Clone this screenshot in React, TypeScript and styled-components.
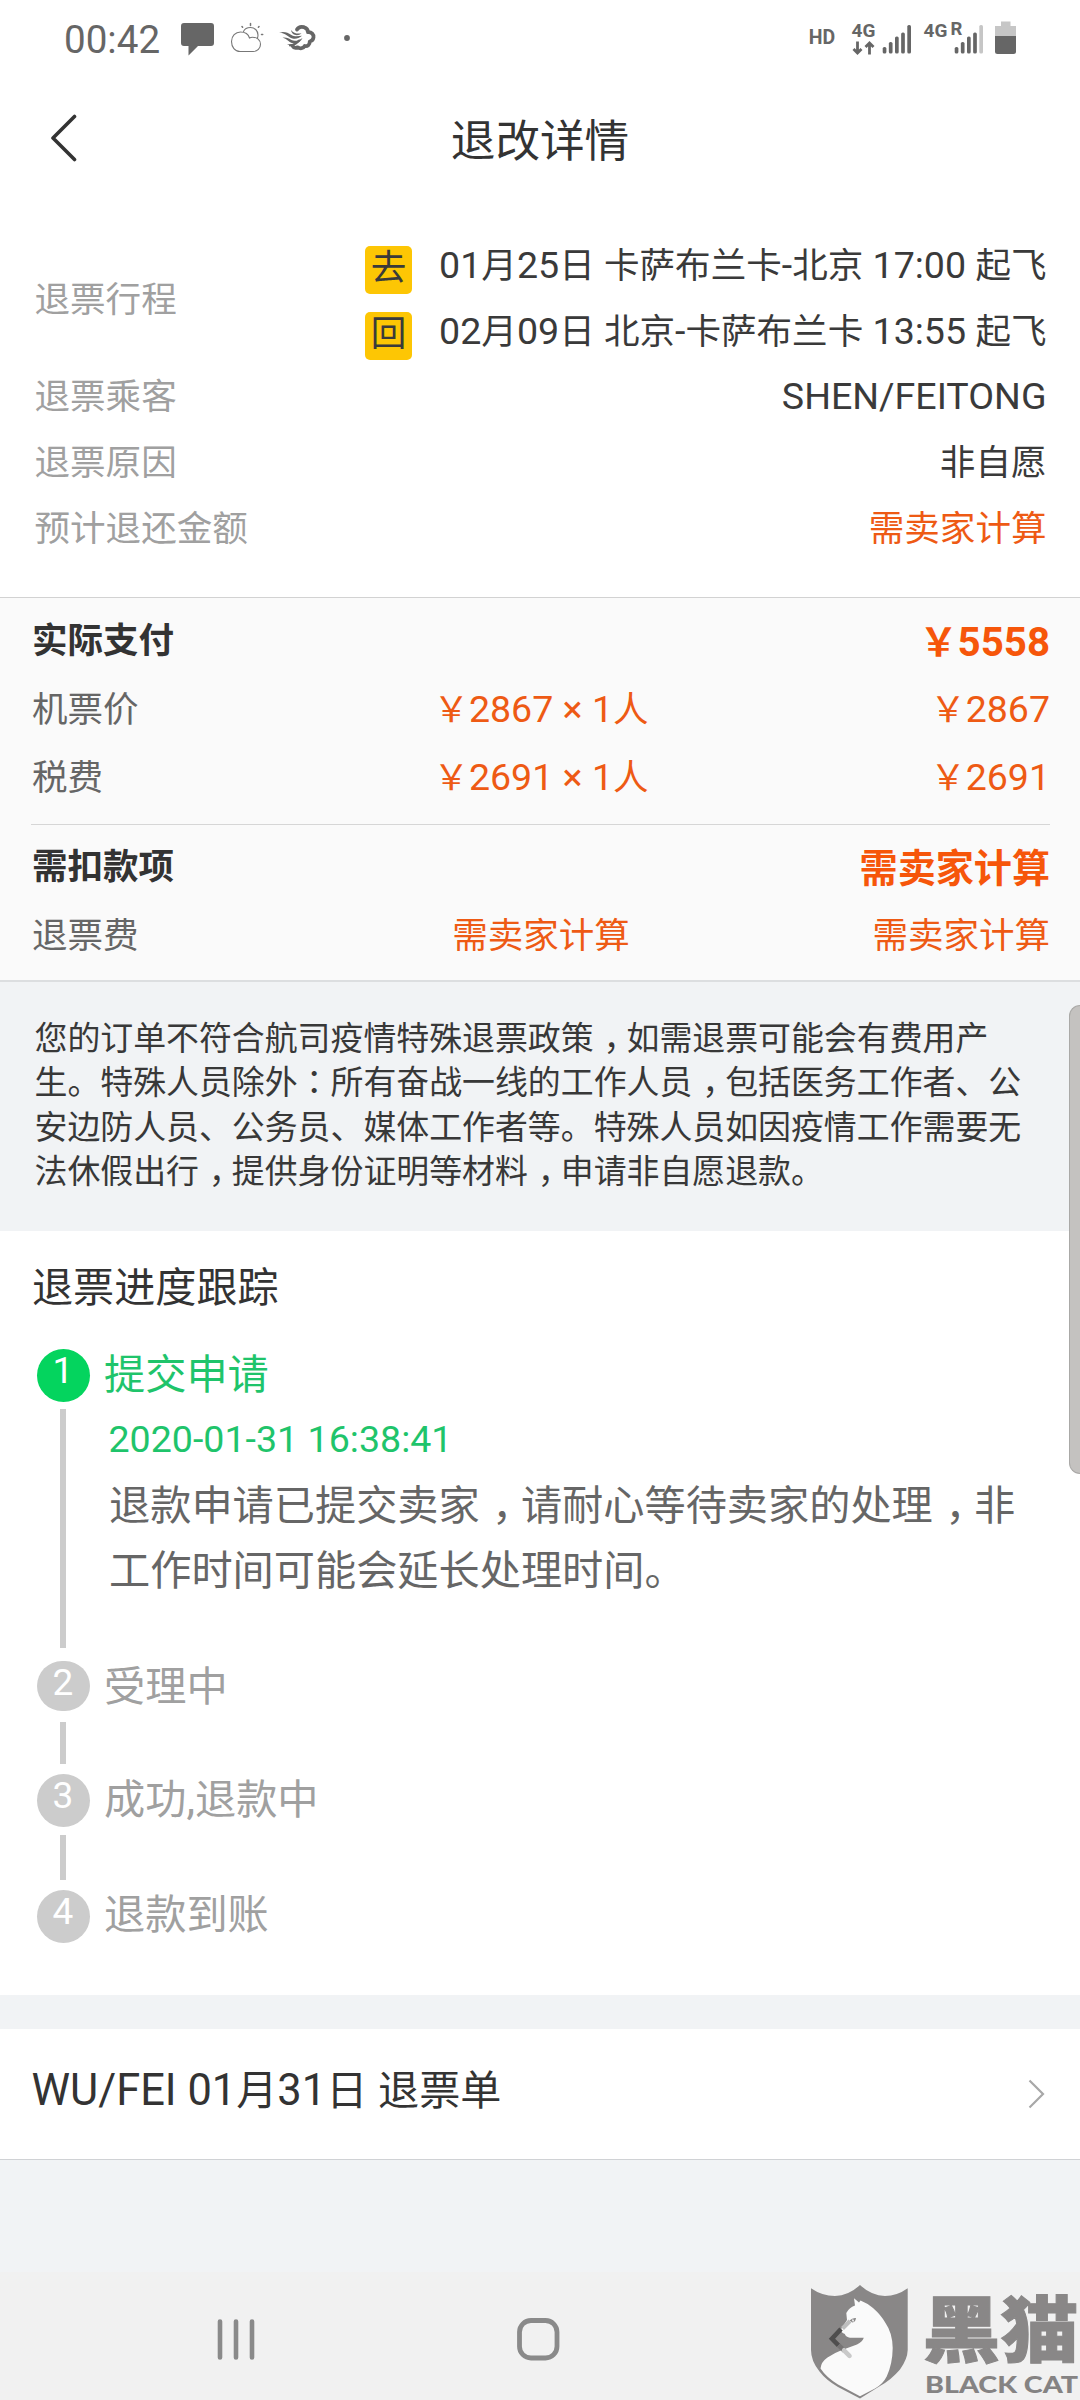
import React from "react";
import styled, { createGlobalStyle } from "styled-components";

const GlobalStyle = createGlobalStyle`
  * { box-sizing: border-box; }
  html, body { margin: 0; padding: 0; background: #fff; }
  body {
    font-family: Roboto, "Noto Sans CJK SC", sans-serif;
    text-spacing-trim: space-all;
    text-autospace: no-autospace;
  }
`;

const ORANGE = "#ee5a14";

const Screen = styled.div`
  position: relative;
  width: 1080px;
  height: 2400px;
  display: flex;
  flex-direction: column;
  background: #f1f3f5;
  overflow: hidden;
`;

/* ---------- mixed script text ---------- */

const Latin = styled.span`
  font-size: 1.057em;
  line-height: 1;
`;
const Comma = styled.span`
  font-feature-settings: "halt";
  padding-left: 0.3em;
  padding-right: 0.2em;
`;
const Colon = styled.span`
  font-family: "Noto Sans CJK JP", sans-serif;
  line-height: 1;
`;

function Mixed({ children }: { children: string }) {
  const runs = children.match(/[\x20-\x7e×]+|，|：|[^\x20-\x7e×，：]+/g) ?? [];
  return (
    <>
      {runs.map((run, i) => {
        if (run === "，") return <Comma key={i}>{run}</Comma>;
        if (run === "：") return <Colon key={i}>{run}</Colon>;
        if (/^[\x20-\x7e×]/.test(run)) return <Latin key={i}>{run}</Latin>;
        return <React.Fragment key={i}>{run}</React.Fragment>;
      })}
    </>
  );
}

/* ---------- status bar ---------- */

const StatusBar = styled.div`
  height: 76px;
  padding: 0 61px 0 64px;
  display: flex;
  justify-content: space-between;
  background: #fff;
  color: #666;
`;
const StatusGroup = styled.div`
  display: flex;
  align-items: flex-start;
`;
const Clock = styled.div`
  width: 117px;
  padding-top: 1px;
  font-size: 38.6px;
  line-height: 77px;
`;

/* ---------- header ---------- */

const Header = styled.div`
  height: 124px;
  padding: 0 50px;
  display: grid;
  grid-template-columns: 60px 1fr 60px;
  background: #fff;
  color: #333;
`;
const BackIcon = styled.svg`
  width: 28px;
  height: 48px;
  margin-top: 38px;
`;
const Title = styled.h1`
  margin: 0;
  font-size: 44.6px;
  font-weight: 400;
  line-height: 132px;
  text-align: center;
`;

/* ---------- refund info ---------- */

const Info = styled.section`
  height: 397px;
  padding: 33px 33.5px 0 34.5px;
  background: #fff;
  font-size: 35.55px;
  line-height: 66px;
`;
const InfoRow = styled.div<{ $h?: number }>`
  height: ${(p) => p.$h ?? 66}px;
  display: flex;
  justify-content: space-between;
  align-items: center;
`;
const InfoLabel = styled.div<{ $drop?: number }>`
  padding-top: ${(p) => p.$drop ?? 0}px;
  color: #a0a0a0;
`;
const InfoValue = styled.div<{ $accent?: boolean }>`
  color: ${(p) => (p.$accent ? ORANGE : "#3a3a3a")};
`;
const Trip = styled.div`
  display: grid;
  grid-template-columns: 47px auto;
  column-gap: 27px;
  height: 66px;
`;
const Badge = styled.span`
  height: 48px;
  margin-top: 13px;
  border-radius: 5px;
  background: #fdc604;
  line-height: 44px;
  text-align: center;
`;

/* ---------- payment ---------- */

const Payment = styled.section`
  height: 385px;
  padding: 8px 30px 0 31px;
  border-top: 1px solid #d2d2d2;
  border-bottom: 2px solid #dcdee0;
  background: #fafafa;
  font-size: 35.5px;
`;
const PayRow = styled.div<{ $h: number }>`
  height: ${(p) => p.$h}px;
  padding: 0 0 0 1px;
  line-height: ${(p) => p.$h}px;
  display: grid;
  grid-template-columns: 1fr 1fr 1fr;
`;
const PayLabel = styled.div<{ $strong?: boolean }>`
  color: ${(p) => (p.$strong ? "#333" : "#666")};
  font-weight: ${(p) => (p.$strong ? 700 : 400)};
`;
const PayDetail = styled.div`
  color: ${ORANGE};
  text-align: center;
  white-space: nowrap;
`;
const PayAmount = styled.div<{ $strong?: boolean }>`
  color: ${(p) => (p.$strong ? "#f6560a" : ORANGE)};
  font-size: ${(p) => (p.$strong ? 38.1 : 35.5)}px;
  font-weight: ${(p) => (p.$strong ? 700 : 400)};
  padding-top: ${(p) => (p.$strong ? 2 : 0)}px;
  text-align: right;
  white-space: nowrap;
`;
const Divider = styled.div`
  height: 1px;
  margin: 12px 0 8px;
  background: #d6d6d6;
`;

/* ---------- notice ---------- */

const Notice = styled.p`
  margin: 0;
  height: 249px;
  padding: 34.5px 56px 0 34.5px;
  font-size: 32.9px;
  line-height: 44.6px;
  color: #383838;
`;

/* ---------- progress ---------- */

const Progress = styled.section`
  height: 764px;
  padding: 26px 30px 0 32px;
  background: #fff;
`;
const ProgressTitle = styled.h2`
  margin: 0 0 30px;
  font-size: 41.1px;
  font-weight: 400;
  line-height: 62px;
  color: #333;
`;
const Step = styled.div<{ $h: number }>`
  height: ${(p) => p.$h}px;
  display: flex;
  padding-left: 4.5px;
`;
const Rail = styled.div`
  width: 53px;
  display: flex;
  flex-direction: column;
  align-items: center;
`;
const Dot = styled.div<{ $done?: boolean; $h: number }>`
  width: 53px;
  height: ${(p) => p.$h}px;
  border-radius: 27px;
  background: ${(p) => (p.$done ? "#04d45e" : "#ccc")};
  color: #fff;
  font-size: 37px;
  line-height: 44px;
  text-align: center;
`;
const Line = styled.div<{ $gap: number; $h: number }>`
  width: 6px;
  height: ${(p) => p.$h}px;
  margin-top: ${(p) => p.$gap}px;
  background: #ccc;
`;
const StepBody = styled.div`
  flex: 1;
  padding-left: 14.5px;
  font-size: 41.2px;
`;
const StepTitle = styled.div<{ $done?: boolean; $lh?: number }>`
  line-height: ${(p) => p.$lh ?? 53}px;
  color: ${(p) => (p.$done ? "#1fc46b" : "#a0a0a0")};
`;
const StepTime = styled.div`
  margin-top: 3px;
  padding-left: 4.5px;
  font-size: 37.6px;
  line-height: 69px;
  color: #1fc46b;
`;
const StepText = styled.div`
  padding-left: 5px;
  line-height: 65px;
  color: #666;
`;

/* ---------- ticket link ---------- */

const TicketRow = styled.div`
  height: 131px;
  margin-top: 34px;
  padding: 0 35px 6px 31.5px;
  border-bottom: 1px solid #d0d2d5;
  display: flex;
  align-items: center;
  justify-content: space-between;
  background: #fff;
  font-size: 41.1px;
  line-height: 60px;
  color: #333;
`;
const Chevron = styled.svg`
  width: 17px;
  height: 30px;
  margin-top: 5px;
`;

/* ---------- navigation bar ---------- */

const NavBar = styled.div`
  height: 128px;
  margin-top: auto;
  padding: 0 217px;
  display: flex;
  background: #f1f1f1;
`;
const NavIcon = styled.svg<{ $left?: number }>`
  width: 44px;
  height: 44px;
  margin-top: 45px;
  margin-left: ${(p) => p.$left ?? 0}px;
`;

/* ---------- overlays ---------- */

const ScrollThumb = styled.div`
  position: absolute;
  top: 1005px;
  right: 0;
  width: 11px;
  height: 469px;
  border: 1px solid #aaa9a7;
  border-right: 0;
  border-radius: 11px 0 0 11px;
  background: #c4c2c0;
`;
const Watermark = styled.svg`
  position: absolute;
  right: 0;
  bottom: 0;
  width: 280px;
  height: 140px;
`;

function SignalBars({ x, weak }: { x: number; weak?: boolean }) {
  const tops = [47, 42, 36.5, 32.5, 25];
  return (
    <>
      {tops.map((top, i) => (
        <rect
          key={i}
          x={x + i * 6.15}
          y={top}
          width="3.7"
          height={53.5 - top}
          rx="1.6"
          fill={weak && i === 4 ? "#c6c6c6" : "#666"}
        />
      ))}
    </>
  );
}

function Status() {
  return (
    <StatusBar>
      <StatusGroup>
        <Clock>00:42</Clock>
        <svg width="180" height="76" viewBox="181 0 180 76">
          <path d="M184 23h27q3 0 3 3v17q0 3-3 3h-13l-9.500 9.500V46H184q-3 0-3-3V26q0-3 3-3z" fill="#666" />
          <g fill="none" stroke="#777" strokeWidth="1.1" strokeLinecap="round">
            <path d="M240 51.500c-5 0-8.500-4.500-8.500-10 0-5.500 4-9.500 9-9.500 4.500 0 8 2.500 9 6 1-.6 2-.8 3-.8 4.500 0 8 3 8 7 0 4.200-3.200 7.300-7.300 7.300z" />
            <path d="M243.500 31.500c1-2.500 4-4 7-4 4.500 0 7.500 3.500 7.500 7.500 0 1.200-.2 2.300-.7 3.300" />
            <path d="M250.500 23.500v2M242 26.500l.6.700M259 26.500l-.6.700M261.500 34.500h1.200" strokeWidth="1.500" />
          </g>
          <g fill="none" stroke="#666" strokeLinecap="round" strokeLinejoin="round">
            <path
              d="M297 29.500c1.500-2.500 4.500-3 7-2.300 2.500.8 4 2.800 4 5 3.500-.3 6 2.300 5.500 5.300-.4 2.500-2 3.600-3.800 4 .2 3-2 5-5 4.500-1.500 2.500-4.500 3-7 1.300-2 1-4 .4-5-1.300"
              strokeWidth="3.800"
            />
            <path d="M290 45.500c4-.5 7-2 9-5" strokeWidth="2" />
          </g>
          <path
            d="M279 32.500c5-1.500 9 0 12 2.300 3 2 7 1.500 11 1-3 2.500-6 3.500-9.500 2.700-4-1-7-5.500-13.500-6zM282.500 37.500c4-.5 6.500.8 9 2.500 3 1.600 7 .8 11-2-1.500 3-4 5.500-8 5.500-5 0-7-4.500-12-6zM287 44c3 .5 5.500.3 8-.8-1.500 2.500-5.500 3-8 .8zM291 30c3 3.800 6.500 4 10.500 3.300-3 3-9.500 2.700-10.500-3.300z"
            fill="#666"
          />
          <circle cx="347" cy="38" r="2.900" fill="#666" />
        </svg>
      </StatusGroup>
      <svg width="210" height="76" viewBox="809 0 210 76" fontFamily="Roboto, sans-serif" fontWeight="700" fill="#666">
        <text x="808.800" y="44" fontSize="19.500">HD</text>
        <text x="851.500" y="36.500" fontSize="19">4G</text>
        <path
          d="M857.500 41.500v11M853.500 49l4 4 4-4M869.500 54.500v-11M865.500 47l4-4 4 4"
          fill="none"
          stroke="#666"
          strokeWidth="2.800"
        />
        <SignalBars x={882.7} />
        <text x="923.500" y="36.500" fontSize="19">4G</text>
        <text x="950.500" y="35" fontSize="18.500">R</text>
        <SignalBars x={954.7} weak />
        <path d="M1001 21.500h9.500V26h5.500v11h-21V26h6z" fill="#c6c6c6" />
        <path d="M995 36h21v15.500q0 2.500-2.500 2.500h-16q-2.500 0-2.500-2.500z" />
      </svg>
    </StatusBar>
  );
}

function BlackCat() {
  return (
    <Watermark viewBox="800 2260 280 140">
      <path
        d="M811 2288.300Q822 2296 835 2296 849 2295.500 860 2285 871 2295.500 885 2296 897 2296 907.700 2288.300V2350Q907.500 2359 900 2369.500 891 2380 880 2386L860 2398.500 838 2387Q826 2380 819.500 2371.500 811 2361 811 2350z"
        fill="#898787"
      />
      <path
        d="M854 2298.300L859 2302.500 860.500 2300.500Q867 2303 873 2308 881 2315 885.500 2323 892.500 2333 892.700 2348 892.500 2364 886.700 2376.500 883 2384 875 2388.500L860 2396.300 838 2384.500Q826 2377 820.500 2368.500 821 2362 827.500 2357.500 834 2353 842 2350L857 2344.500Q862.500 2342 863.800 2337.800L850 2337.800Q846 2337.300 844.800 2334 840 2332 841.500 2328.500L847 2320 846.300 2313Q849 2307.500 855 2305.500z"
        fill="#fafafa"
      />
      <path d="M849.500 2320.500q3-3 6.500-2.500-.5 4-3.500 4.500z" fill="#8a8888" />
      <path d="M852.500 2319.500l1 2" stroke="#fafafa" strokeWidth="1.500" />
      <path d="M850 2321l-7.500 7.500" stroke="#bdbdbd" strokeWidth="4" fill="none" />
      <path d="M841 2329l-9 9.800 6.500 6.500" stroke="#4f4e4e" strokeWidth="4.600" fill="none" />
      <path d="M838.500 2345.300l6 5.500" stroke="#767474" strokeWidth="4.600" fill="none" />
      <path d="M844 2350.300l5.500 5.500" stroke="#c9c9c9" strokeWidth="4.600" strokeLinecap="round" fill="none" />
      <text
        x="922.500"
        y="2356"
        fontFamily="'Noto Sans CJK SC', sans-serif"
        fontWeight="900"
        fontSize="72"
        textLength="156"
        lengthAdjust="spacingAndGlyphs"
        fill="#898787"
        stroke="#898787"
        strokeWidth="1"
      >
        黑猫
      </text>
      <text
        x="925"
        y="2392.500"
        fontFamily="Lato, sans-serif"
        fontWeight="900"
        fontSize="23"
        textLength="153"
        lengthAdjust="spacingAndGlyphs"
        fill="#858383"
      >
        BLACK CAT
      </text>
    </Watermark>
  );
}

const trips = [
  { badge: "去", text: "01月25日 卡萨布兰卡-北京 17:00 起飞" },
  { badge: "回", text: "02月09日 北京-卡萨布兰卡 13:55 起飞" },
];

const pending = [
  { title: "受理中", h: 113, dot: 50, gap: 11, line: 42, lh: 53 },
  { title: "成功,退款中", h: 116, dot: 53, gap: 7.5, line: 45, lh: 53 },
  { title: "退款到账", h: 53, dot: 53, gap: 0, line: 0, lh: 50 },
];

export default function App() {
  return (
    <Screen>
      <GlobalStyle />
      <Status />
      <Header>
        <BackIcon viewBox="50 114 28 48">
          <path d="M74.500 116.500L53 138l21.500 21.500" fill="none" stroke="#333" strokeWidth="3.600" strokeLinecap="round" strokeLinejoin="round" />
        </BackIcon>
        <Title>退改详情</Title>
      </Header>

      <Info>
        <InfoRow $h={131}>
          <InfoLabel $drop={3}>退票行程</InfoLabel>
          <InfoValue>
            {trips.map((t) => (
              <Trip key={t.badge}>
                <Badge>{t.badge}</Badge>
                <span><Mixed>{t.text}</Mixed></span>
              </Trip>
            ))}
          </InfoValue>
        </InfoRow>
        <InfoRow>
          <InfoLabel>退票乘客</InfoLabel>
          <InfoValue><Mixed>SHEN/FEITONG</Mixed></InfoValue>
        </InfoRow>
        <InfoRow>
          <InfoLabel>退票原因</InfoLabel>
          <InfoValue>非自愿</InfoValue>
        </InfoRow>
        <InfoRow>
          <InfoLabel>预计退还金额</InfoLabel>
          <InfoValue $accent>需卖家计算</InfoValue>
        </InfoRow>
      </Info>

      <Payment>
        <PayRow $h={70}>
          <PayLabel $strong>实际支付</PayLabel>
          <span />
          <PayAmount $strong><Mixed>￥5558</Mixed></PayAmount>
        </PayRow>
        <PayRow $h={68}>
          <PayLabel>机票价</PayLabel>
          <PayDetail><Mixed>￥2867 × 1人</Mixed></PayDetail>
          <PayAmount><Mixed>￥2867</Mixed></PayAmount>
        </PayRow>
        <PayRow $h={68}>
          <PayLabel>税费</PayLabel>
          <PayDetail><Mixed>￥2691 × 1人</Mixed></PayDetail>
          <PayAmount><Mixed>￥2691</Mixed></PayAmount>
        </PayRow>
        <Divider />
        <PayRow $h={69}>
          <PayLabel $strong>需扣款项</PayLabel>
          <span />
          <PayAmount $strong>需卖家计算</PayAmount>
        </PayRow>
        <PayRow $h={69}>
          <PayLabel>退票费</PayLabel>
          <PayDetail>需卖家计算</PayDetail>
          <PayAmount>需卖家计算</PayAmount>
        </PayRow>
      </Payment>

      <Notice>
        <Mixed>您的订单不符合航司疫情特殊退票政策，如需退票可能会有费用产生。特殊人员除外：所有奋战一线的工作人员，包括医务工作者、公安边防人员、公务员、媒体工作者等。特殊人员如因疫情工作需要无法休假出行，提供身份证明等材料，申请非自愿退款。</Mixed>
      </Notice>

      <Progress>
        <ProgressTitle>退票进度跟踪</ProgressTitle>
        <Step $h={312}>
          <Rail>
            <Dot $done $h={53}>1</Dot>
            <Line $gap={7} $h={239} />
          </Rail>
          <StepBody>
            <StepTitle $done>提交申请</StepTitle>
            <StepTime>2020-01-31 16:38:41</StepTime>
            <StepText>
              <Mixed>退款申请已提交卖家，请耐心等待卖家的处理，非工作时间可能会延长处理时间。</Mixed>
            </StepText>
          </StepBody>
        </Step>
        {pending.map((s, i) => (
          <Step key={s.title} $h={s.h}>
            <Rail>
              <Dot $h={s.dot}>{i + 2}</Dot>
              {s.line > 0 && <Line $gap={s.gap} $h={s.line} />}
            </Rail>
            <StepBody>
              <StepTitle $lh={s.lh}><Mixed>{s.title}</Mixed></StepTitle>
            </StepBody>
          </Step>
        ))}
      </Progress>

      <TicketRow>
        <span><Mixed>WU/FEI 01月31日 退票单</Mixed></span>
        <Chevron viewBox="0 0 17 30">
          <path d="M1.500 1.500L15 15 1.500 28.500" fill="none" stroke="#a8a8a8" strokeWidth="2.200" />
        </Chevron>
      </TicketRow>

      <NavBar>
        <NavIcon viewBox="0 0 44 44">
          <path d="M3 4.500v36M19 4.500v36M35 4.500v36" stroke="#8a8a8a" strokeWidth="4.600" strokeLinecap="round" />
        </NavIcon>
        <NavIcon viewBox="0 0 44 44" $left={255}>
          <rect x="3.500" y="3.500" width="37.500" height="37.500" rx="11.500" fill="none" stroke="#8a8a8a" strokeWidth="4.800" />
        </NavIcon>
      </NavBar>

      <ScrollThumb />
      <BlackCat />
    </Screen>
  );
}
